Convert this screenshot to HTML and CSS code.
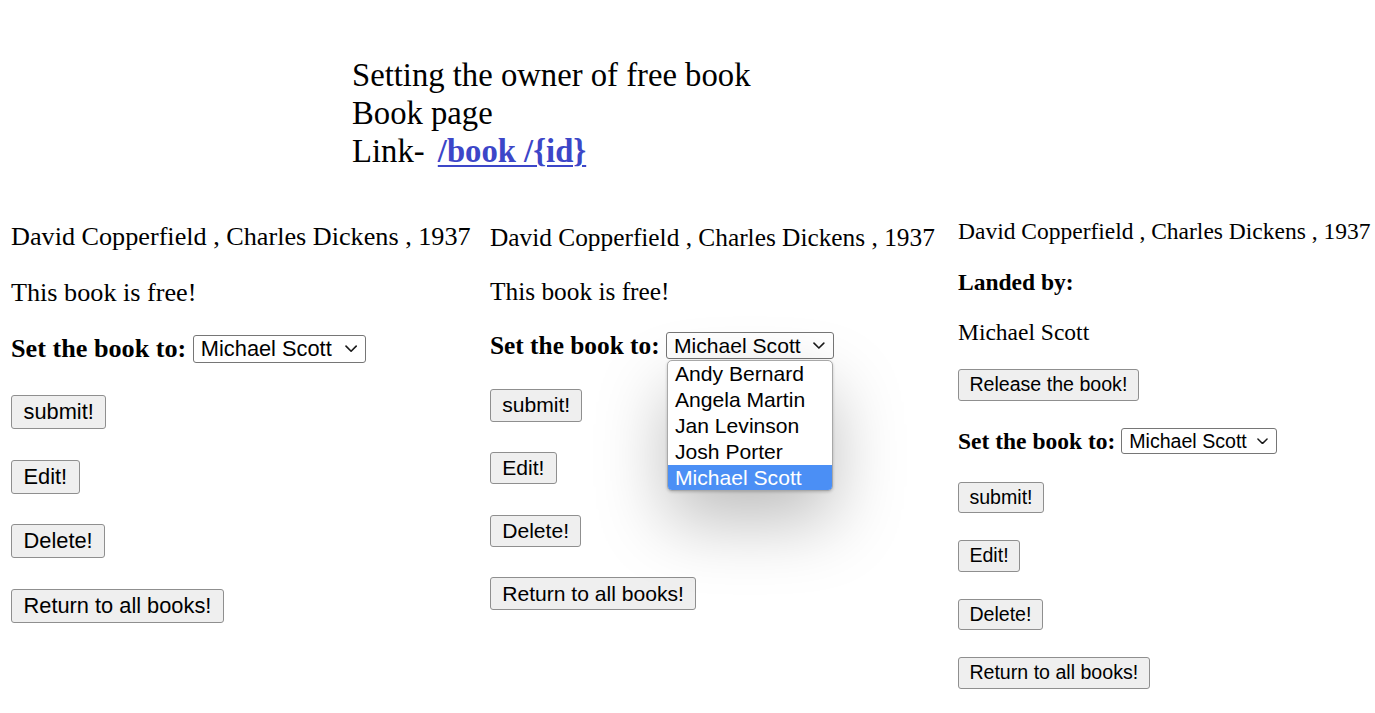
FILE: index.html
```html
<!DOCTYPE html>
<html lang="en">
<head>
<meta charset="utf-8">
<title>Book page</title>
<link rel="stylesheet" href="styles.css">
</head>
<body>
<header class="intro">
  <div>Setting the owner of free book</div>
  <div>Book page</div>
  <div>Link- <a class="route" href="#">/book /{id}</a></div>
</header>

<main class="pages">
  <section class="page page-one">
    <p class="line">David Copperfield , Charles Dickens , 1937</p>
    <p class="line">This book is free!</p>
    <div class="row">
      <b>Set the book to:</b>
      <span class="select"><span>Michael Scott</span><svg class="chev" viewBox="0 0 12 7"><polyline points="1,1 6,6 11,1"/></svg></span>
    </div>
    <button class="btn">submit!</button>
    <button class="btn">Edit!</button>
    <button class="btn">Delete!</button>
    <button class="btn">Return to all books!</button>
  </section>

  <section class="page page-two">
    <p class="line">David Copperfield , Charles Dickens , 1937</p>
    <p class="line">This book is free!</p>
    <div class="row">
      <b>Set the book to:</b>
      <span class="select open"><span>Michael Scott</span><svg class="chev" viewBox="0 0 12 7"><polyline points="1,1 6,6 11,1"/></svg>
        <ul class="menu">
          <li>Andy Bernard</li>
          <li>Angela Martin</li>
          <li>Jan Levinson</li>
          <li>Josh Porter</li>
          <li class="picked">Michael Scott</li>
        </ul>
      </span>
    </div>
    <button class="btn">submit!</button>
    <button class="btn">Edit!</button>
    <button class="btn">Delete!</button>
    <button class="btn">Return to all books!</button>
  </section>

  <section class="page page-three">
    <p class="line">David Copperfield , Charles Dickens , 1937</p>
    <p class="line landed"><b>Landed by:</b></p>
    <p class="line owner">Michael Scott</p>
    <button class="btn release">Release the book!</button>
    <div class="row">
      <b>Set the book to:</b>
      <span class="select"><span>Michael Scott</span><svg class="chev" viewBox="0 0 12 7"><polyline points="1,1 6,6 11,1"/></svg></span>
    </div>
    <button class="btn">submit!</button>
    <button class="btn">Edit!</button>
    <button class="btn">Delete!</button>
    <button class="btn">Return to all books!</button>
  </section>
</main>
</body>
</html>
```
FILE: styles.css
```css
html, body {
  margin: 0;
  padding: 0;
  background: #ffffff;
}
body {
  font-family: "Liberation Serif", "Times New Roman", serif;
  color: #000;
}

.intro {
  padding: 56px 0 0 352px;
  font-size: 32.7px;
  line-height: 38px;
  height: 114px;
}
.route {
  margin-left: 5px;
  color: #3c46c8;
  font-weight: bold;
  text-decoration: underline;
  text-decoration-thickness: 2px;
  text-underline-offset: 3px;
}

.pages {
  display: flex;
  align-items: flex-start;
}

.page {
  display: flex;
  flex-direction: column;
  align-items: flex-start;
  box-sizing: border-box;
}
.line {
  margin: 0;
  white-space: nowrap;
}
.row {
  display: flex;
  align-items: center;
  white-space: nowrap;
}
.row b {
  margin-right: 0.25em;
}

.select {
  position: relative;
  display: flex;
  align-items: center;
  justify-content: space-between;
  box-sizing: border-box;
  border: 1px solid #767676;
  border-radius: 3px;
  background: #fff;
  font-family: "Liberation Sans", Arial, sans-serif;
  color: #000;
  padding: 0 8px 0 7px;
}
.chev {
  width: 0.56em;
  height: 0.34em;
  fill: none;
  stroke: #1a1a1a;
  stroke-width: 1.6;
  stroke-linecap: round;
  stroke-linejoin: round;
}

.btn {
  display: block;
  box-sizing: border-box;
  font-family: "Liberation Sans", Arial, sans-serif;
  color: #000;
  background: #efefef;
  border: 1px solid #8f8f8f;
  border-radius: 3px;
  padding: 0 0.53em;
  white-space: nowrap;
}

/* page one */
.page-one {
  width: 490px;
  padding-left: 11px;
  margin-top: 52px;
  font-size: 26.2px;
  line-height: 30px;
}
.page-one .line { margin-bottom: 26px; }
.page-one .row { height: 30px; margin-bottom: 31px; }
.page-one .select { width: 173px; height: 28px; font-size: 21.8px; }
.page-one .btn { font-size: 21.8px; height: 34px; margin-bottom: 30.5px; }

/* page two */
.page-two {
  width: 468px;
  margin-top: 52.5px;
  font-size: 25.35px;
  line-height: 29px;
}
.page-two .line { margin-bottom: 25px; }
.page-two .row { height: 29px; margin-bottom: 29px; margin-top: 0.5px; }
.page-two .select { width: 168px; height: 27px; font-size: 21.1px; }
.page-two .btn { font-size: 21.1px; height: 32.5px; margin-bottom: 30.3px; }

.menu {
  position: absolute;
  top: 26.5px;
  left: 0;
  width: 166px;
  margin: 0;
  padding: 0;
  list-style: none;
  box-sizing: border-box;
  background: #fff;
  border: 1px solid #a8a8a8;
  border-radius: 5px;
  overflow: hidden;
  font-size: 21.1px;
  line-height: 26px;
  box-shadow: 0 1px 3px rgba(0, 0, 0, 0.2), 0 30px 70px rgba(0, 0, 0, 0.26);
  z-index: 5;
}
.menu li {
  padding-left: 7px;
  height: 26px;
  color: #000;
}
.menu li.picked {
  background: #4b8ff5;
  color: #fff;
  height: 25px;
  line-height: 25px;
}

/* page three */
.page-three {
  flex: 1;
  margin-top: 47.5px;
  font-size: 23.5px;
  line-height: 27px;
}
.page-three .line { margin-bottom: 24px; }
.page-three .line.landed { margin-bottom: 23px; }
.page-three .line.owner { margin-bottom: 23.5px; }
.page-three .release { margin-bottom: 27.5px; }
.page-three .row { height: 27px; margin-bottom: 27px; }
.page-three .select { width: 156px; height: 26px; font-size: 19.6px; }
.page-three .btn { font-size: 19.6px; height: 31.5px; margin-bottom: 27px; }
```
